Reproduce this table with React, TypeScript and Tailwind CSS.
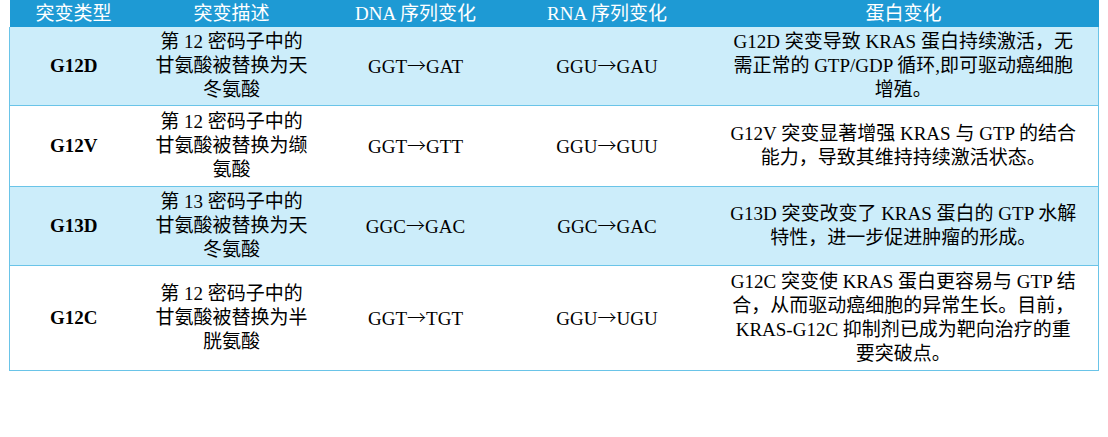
import React from 'react';

type Row = {
  type: string;
  desc: string[];
  dna: [string, string];
  rna: [string, string];
  protein: string[];
  tint: boolean;
  h: string;
};

const rows: Row[] = [
  {
    type: 'G12D',
    desc: ['第 12 密码子中的', '甘氨酸被替换为天', '冬氨酸'],
    dna: ['GGT', 'GAT'],
    rna: ['GGU', 'GAU'],
    protein: ['G12D 突变导致 KRAS 蛋白持续激活，无', '需正常的 GTP/GDP 循环,即可驱动癌细胞', '增殖。'],
    tint: true,
    h: 'h-[78px]',
  },
  {
    type: 'G12V',
    desc: ['第 12 密码子中的', '甘氨酸被替换为缬', '氨酸'],
    dna: ['GGT', 'GTT'],
    rna: ['GGU', 'GUU'],
    protein: ['G12V 突变显著增强 KRAS 与 GTP 的结合', '能力，导致其维持持续激活状态。'],
    tint: false,
    h: 'h-[81px]',
  },
  {
    type: 'G13D',
    desc: ['第 13 密码子中的', '甘氨酸被替换为天', '冬氨酸'],
    dna: ['GGC', 'GAC'],
    rna: ['GGC', 'GAC'],
    protein: ['G13D 突变改变了 KRAS 蛋白的 GTP 水解', '特性，进一步促进肿瘤的形成。'],
    tint: true,
    h: 'h-[79px]',
  },
  {
    type: 'G12C',
    desc: ['第 12 密码子中的', '甘氨酸被替换为半', '胱氨酸'],
    dna: ['GGT', 'TGT'],
    rna: ['GGU', 'UGU'],
    protein: [
      'G12C 突变使 KRAS 蛋白更容易与 GTP 结',
      '合，从而驱动癌细胞的异常生长。目前，',
      'KRAS-G12C 抑制剂已成为靶向治疗的重',
      '要突破点。',
    ],
    tint: false,
    h: 'h-[105px]',
  },
];

const Lines = ({ lines }: { lines: string[] }) => (
  <>
    {lines.map((l, i) => (
      <span key={i} className="block whitespace-nowrap">
        {l}
      </span>
    ))}
  </>
);

const Change = ({ pair }: { pair: [string, string] }) => (
  <span className="whitespace-nowrap">
    {pair[0]}
    <span className="font-['Noto_Sans_CJK_SC',sans-serif] font-light">→</span>
    {pair[1]}
  </span>
);

export default function App() {
  return (
    <div className="w-[1108px] h-[437px] bg-white pl-[9px] font-['Liberation_Serif','Noto_Sans_CJK_SC',serif] text-[19px] leading-[24px] text-black">
      <table className="w-[1089px] table-fixed border-collapse">
        <colgroup>
          <col className="w-[128px]" />
          <col className="w-[188px]" />
          <col className="w-[180px]" />
          <col className="w-[203px]" />
          <col className="w-[390px]" />
        </colgroup>
        <thead>
          <tr className="h-[27px] bg-[#1e9ad4] text-white text-[19px]">
            <th className="font-normal p-0">突变类型</th>
            <th className="font-normal p-0">突变描述</th>
            <th className="font-normal p-0">DNA 序列变化</th>
            <th className="font-normal p-0">RNA 序列变化</th>
            <th className="font-normal p-0">蛋白变化</th>
          </tr>
        </thead>
        <tbody className="border-x border-b border-[#6ac4e8]">
          {rows.map((r) => (
            <tr
              key={r.type}
              className={`${r.h} border-b border-[#6ac4e8] ${r.tint ? 'bg-[#ccedfa]' : 'bg-white'}`}
            >
              <td className="p-0 text-center align-middle font-bold">{r.type}</td>
              <td className="p-0 text-center align-middle">
                <Lines lines={r.desc} />
              </td>
              <td className="p-0 text-center align-middle">
                <Change pair={r.dna} />
              </td>
              <td className="p-0 text-center align-middle">
                <Change pair={r.rna} />
              </td>
              <td className="p-0 text-center align-middle">
                <Lines lines={r.protein} />
              </td>
            </tr>
          ))}
        </tbody>
      </table>
    </div>
  );
}
